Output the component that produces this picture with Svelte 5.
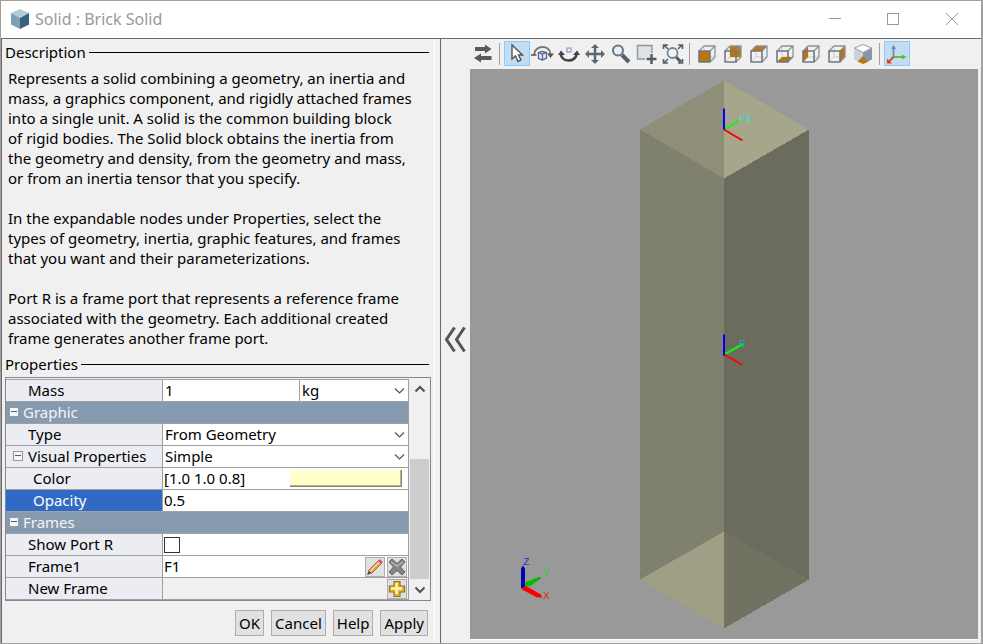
<script>
  const paragraphs = [
    [
      'Represents a solid combining a geometry, an inertia and',
      'mass, a graphics component, and rigidly attached frames',
      'into a single unit. A solid is the common building block',
      'of rigid bodies. The Solid block obtains the inertia from',
      'the geometry and density, from the geometry and mass,',
      'or from an inertia tensor that you specify.'
    ],
    [
      'In the expandable nodes under Properties, select the',
      'types of geometry, inertia, graphic features, and frames',
      'that you want and their parameterizations.'
    ],
    [
      'Port R is a frame port that represents a reference frame',
      'associated with the geometry. Each additional created',
      'frame generates another frame port.'
    ]
  ];

  const faces = [
    { name: 'Front view', d: 'M5 10H16V21H5Z' },
    { name: 'Back view', d: 'M10 5H21V16H10Z' },
    { name: 'Top view', d: 'M5 10L10 5H21L16 10Z' },
    { name: 'Bottom view', d: 'M5 21L10 16H21L16 21Z' },
    { name: 'Left view', d: 'M5 10L10 5V16L5 21Z' },
    { name: 'Right view', d: 'M16 10L21 5V16L16 21Z' }
  ];
</script>

{#snippet chevron()}
  <svg class="chevron" width="11" height="8" viewBox="0 0 11 8" aria-hidden="true">
    <path d="M1 1.5L5.5 6L10 1.5" fill="none" stroke="#555" stroke-width="1.2" />
  </svg>
{/snippet}

{#snippet minus()}
  <svg width="10" height="10" viewBox="0 0 10 10" aria-hidden="true">
    <rect x=".5" y=".5" width="9" height="9" fill="#f6f6f6" stroke="#989898" />
    <path d="M2 4.5H8" stroke="#3c5fa8" />
  </svg>
{/snippet}

<div class="window">
  <header>
    <svg class="logo" width="20" height="22" viewBox="0 0 20 22" aria-hidden="true">
      <path d="M10 0L19 4L10 9L1 4Z" fill="#b5cad8" />
      <path d="M1 4L10 9V20L1 15.500Z" fill="#7f9fb7" />
      <path d="M19 4L10 9V20L19 15.500Z" fill="#376180" />
    </svg>
    <h1>Solid : Brick Solid</h1>
    <button class="win" aria-label="Minimize">
      <svg width="14" height="14" viewBox="0 0 14 14"><path d="M0 5.500H12" stroke="#999" /></svg>
    </button>
    <button class="win" aria-label="Maximize">
      <svg width="14" height="14" viewBox="0 0 14 14"><rect x=".5" y=".5" width="11" height="11" fill="none" stroke="#999" /></svg>
    </button>
    <button class="win" aria-label="Close">
      <svg width="14" height="14" viewBox="0 0 14 14"><path d="M1 0L13 12M13 0L1 12" stroke="#999" /></svg>
    </button>
  </header>

  <div class="body">
    <main class="left">
      <h2>Description</h2>
      <div class="description">
        {#each paragraphs as lines}
          <p>{#each lines as line, i}{line}{#if i < lines.length - 1}<br />{/if}{/each}</p>
        {/each}
      </div>
      <h2>Properties</h2>

      <div class="grid-box">
        <table>
          <colgroup><col class="names" /><col /></colgroup>
          <tbody>
            <tr>
              <th><label for="mass">Mass</label></th>
              <td>
                <div class="cell">
                  <input id="mass" type="text" value="1" />
                  <div class="pick unit">
                    <select aria-label="Mass unit"><option>kg</option></select>{@render chevron()}
                  </div>
                </div>
              </td>
            </tr>
            <tr class="group">
              <th colspan="2"><div class="name"><button aria-label="Collapse Graphic">{@render minus()}</button>Graphic</div></th>
            </tr>
            <tr>
              <th><label for="type">Type</label></th>
              <td>
                <div class="pick">
                  <select id="type"><option>From Geometry</option></select>{@render chevron()}
                </div>
              </td>
            </tr>
            <tr>
              <th class="nested">
                <div class="name">
                  <button aria-label="Collapse Visual Properties">{@render minus()}</button>
                  <label for="visual">Visual Properties</label>
                </div>
              </th>
              <td>
                <div class="pick">
                  <select id="visual"><option>Simple</option></select>{@render chevron()}
                </div>
              </td>
            </tr>
            <tr>
              <th class="deep"><label for="color">Color</label></th>
              <td>
                <div class="cell">
                  <input id="color" class="tight" type="text" value="[1.0 1.0 0.8]" />
                  <button class="swatch" aria-label="Choose color"></button>
                </div>
              </td>
            </tr>
            <tr class="selected">
              <th class="deep"><label for="opacity">Opacity</label></th>
              <td><div class="cell"><input id="opacity" class="tight" type="text" value="0.5" /></div></td>
            </tr>
            <tr class="group">
              <th colspan="2"><div class="name"><button aria-label="Collapse Frames">{@render minus()}</button>Frames</div></th>
            </tr>
            <tr>
              <th><label for="port">Show Port R</label></th>
              <td><div class="cell"><input id="port" type="checkbox" /></div></td>
            </tr>
            <tr>
              <th><label for="frame">Frame1</label></th>
              <td>
                <div class="cell tools">
                  <input id="frame" class="tight" type="text" value="F1" />
                  <button class="tool" aria-label="Edit frame">
                    <svg width="18" height="18" viewBox="0 0 18 18">
                      <path d="M1 17L3 12L6 15Z" fill="#444" />
                      <path d="M2.500 12.500L12.500 2.500L15.500 5.500L5.500 15.500Z" fill="#e6a45a" stroke="#85562c" stroke-width=".8" />
                      <path d="M4 13.500L13.500 4" stroke="#ffd29a" stroke-width="1.200" />
                      <path d="M12 3L14 1L17 4L15 6Z" fill="#dd4f83" />
                    </svg>
                  </button>
                  <button class="tool" aria-label="Delete frame">
                    <svg width="18" height="18" viewBox="0 0 18 18">
                      <path d="M1 4L4 1L9 5.500L14 1L17 4L12.500 9L17 14L14 17L9 12.500L4 17L1 14L5.500 9Z" fill="#858585" stroke="#606060" />
                      <path d="M3 4L9 8L15 4" fill="none" stroke="#b5b5b5" stroke-width="1.500" />
                    </svg>
                  </button>
                </div>
              </td>
            </tr>
            <tr>
              <th>New Frame</th>
              <td class="empty">
                <div class="cell tools">
                  <button class="tool last" aria-label="Add frame">
                    <svg width="18" height="18" viewBox="0 0 18 18">
                      <path d="M6 1.500H12V6H16.500V12H12V16.500H6V12H1.500V6H6Z" fill="#e0b535" stroke="#94701a" stroke-width="1.200" />
                      <path d="M8.500 3V14M3 8.500H14" stroke="#fff3b0" stroke-width="2.500" />
                    </svg>
                  </button>
                </div>
              </td>
            </tr>
          </tbody>
        </table>
        <div class="scrollbar">
          <button aria-label="Scroll up">
            <svg width="12" height="8" viewBox="0 0 12 8"><path d="M1.500 6.500L6 2L10.500 6.500" fill="none" stroke="#505050" stroke-width="2" /></svg>
          </button>
          <div class="thumb"></div>
          <button aria-label="Scroll down">
            <svg width="12" height="8" viewBox="0 0 12 8"><path d="M1.500 1.500L6 6L10.500 1.500" fill="none" stroke="#505050" stroke-width="2" /></svg>
          </button>
        </div>
      </div>

      <div class="actions">
        <button>OK</button><button>Cancel</button><button>Help</button><button>Apply</button>
      </div>
    </main>

    <section class="right">
      <button class="collapse" aria-label="Hide properties">
        <svg width="24" height="28" viewBox="0 0 24 28">
          <path d="M10.500 1.500L2.500 13.500L10.500 25.500M20.500 1.500L12.500 13.500L20.500 25.500" fill="none" stroke="#555" stroke-width="3" />
        </svg>
      </button>
      <div class="stage">
        <nav class="toolbar" aria-label="View tools">
          <button aria-label="Update visualization">
            <svg viewBox="0 0 26 25">
              <path d="M5 6H15V3.500L21.500 8L15 12.500V10H5ZM21.500 15H11V12.500L4 17L11 21.500V19H21.500Z" fill="#5a5a5a" />
            </svg>
          </button>
          <i></i>
          <button class="on" aria-label="Select">
            <svg viewBox="0 0 26 25">
              <path d="M8 4V18L11.500 15L14 20.500L17 19L14.500 14H18.500Z" fill="#fff" stroke="#555" stroke-width="1.400" />
            </svg>
          </button>
          <button aria-label="Rotate">
            <svg viewBox="0 0 26 25" fill="none">
              <path d="M4 14C4 4 20 3 20.500 13" stroke="#777" stroke-width="2" />
              <path d="M17 12.500H24L20.500 17Z" fill="#555" />
              <path d="M1 14H6.500" stroke="#555" stroke-width="1.500" />
              <path d="M8.500 11.500L12 10.500L16.500 11.500V17L12.500 19L8.500 17.500ZM8.500 11.500L12.500 13L16.500 11.500M12.500 13V19" fill="#e5ebf8" stroke="#4d628e" stroke-width="1.300" />
            </svg>
          </button>
          <button aria-label="Roll">
            <svg viewBox="0 0 26 25" fill="none">
              <path d="M5 12C4 22 21 22 20.500 12" stroke="#444" stroke-width="2.600" />
              <path d="M2 14L5 9.500L9 14ZM17 14L21 9.500L24 14Z" fill="#444" />
              <rect x="11" y="7" width="4" height="4" fill="#edf1f6" stroke="#7790b0" />
            </svg>
          </button>
          <button aria-label="Pan">
            <svg viewBox="0 0 26 25">
              <path d="M13 5V21M5 13H21" stroke="#586878" stroke-width="2.500" />
              <path d="M9 7L13 3L17 7ZM9 19L13 23L17 19ZM7 9L3 13L7 17ZM19 9L23 13L19 17Z" fill="#586878" />
            </svg>
          </button>
          <button aria-label="Zoom">
            <svg viewBox="0 0 26 25">
              <path d="M14 14L21 21" stroke="#555e69" stroke-width="4" />
              <circle cx="10" cy="9.500" r="5" fill="#e8eef3" stroke="#69737d" stroke-width="2" />
            </svg>
          </button>
          <button aria-label="Zoom to region">
            <svg viewBox="0 0 26 25">
              <path d="M3.500 4.500H18V18H3.500Z" fill="#dce2e8" stroke="#8c969f" stroke-width="1.400" />
              <path d="M17.500 12V24M11 18H23" stroke="#f0f0f0" stroke-width="4" />
              <path d="M17.500 13V23M12.500 18H22.500" stroke="#505b67" stroke-width="2.500" />
            </svg>
          </button>
          <button aria-label="Fit to view">
            <svg viewBox="0 0 26 25">
              <path d="M3.500 8V4H8M18 4H22.500V8M3.500 18V22H8M18 22H22.500V18M4 4L8 8M22 4L18 8M4 22L8 18" fill="none" stroke="#52606e" stroke-width="1.600" />
              <path d="M15 15L21 21" stroke="#505862" stroke-width="3" />
              <circle cx="12.500" cy="12" r="5" fill="#eef3f7" stroke="#7b858e" stroke-width="1.800" />
            </svg>
          </button>
          <i></i>
          {#each faces as face}
            <button aria-label={face.name}>
              <svg viewBox="0 0 26 25" fill="none" stroke-linejoin="round">
                <path d="M10 5V16M10 16H21M10 16L5 21" stroke="#c9cdd1" />
                <path d={face.d} fill="#bc750d" />
                <path d="M5 10L10 5H21V16L16 21M16 10L21 5" stroke="#8b9299" stroke-width="1.300" />
                <path d="M5 10H16V21H5Z" stroke="#6f7780" stroke-width="1.600" />
              </svg>
            </button>
          {/each}
          <button aria-label="Isometric view">
            <svg viewBox="0 0 26 25">
              <path d="M4 7L13 12V23L4 18.500Z" fill="#cbd2da" />
              <path d="M22 7L13 12V23L22 18.500Z" fill="#8494ab" />
              <path d="M13 3.500L21.500 7L13 11.500L4.500 7Z" fill="#fff" stroke="#999" />
              <path d="M13 15L18.500 20.500L13 23L7.500 20.500Z" fill="#b9781c" />
            </svg>
          </button>
          <i></i>
          <button class="on" aria-label="Show frames">
            <svg viewBox="0 0 26 25">
              <path d="M9.500 16V7" stroke="#7289a5" stroke-width="1.800" />
              <path d="M7 8L9.500 4L12 8Z" fill="#7289a5" />
              <path d="M9.500 16H18" stroke="#62bb20" stroke-width="1.800" />
              <path d="M18 13.500L22.500 16L18 18.500Z" fill="#62bb20" />
              <path d="M9.500 16L5 20.500" stroke="#d8421e" stroke-width="1.800" />
              <path d="M3 17.500V22.500H8Z" fill="#d8421e" />
            </svg>
          </button>
        </nav>
        <div class="viewport">
          <svg viewBox="0 0 508 569" role="img" aria-label="Brick solid with frames F1 and R">
            <g shape-rendering="crispEdges">
              <path d="M254 11L170 60L254 109Z" fill="#8f8e79" />
              <path d="M254 11L339 60L254 109Z" fill="#a6a68b" />
              <path d="M170 60L254 109V462L170 510Z" fill="#80806e" />
              <path d="M339 60L254 109V462L339 510Z" fill="#6b6b5e" />
              <path d="M170 510L254 462V559Z" fill="#9f9f86" />
              <path d="M339 510L254 462V559Z" fill="#727262" />
            </g>
            <g fill="none" stroke-width="2">
              <path d="M254 60L269 51.500M254 285L273 274.500" stroke="#0f0" />
              <path d="M254 60L272.500 71M254 285L272.500 295.500" stroke="#f00" />
              <path d="M254 60V39M254 286V265" stroke="#00f" />
            </g>
            <path d="M53 518L56 512.500L70 507L71 509L61 516Z" fill="#0b0" />
            <path d="M52 517L57 517L71 525L72 528L67 528L52 520Z" fill="#f00" />
            <path d="M51 519V499L53 496L55 499V517Z" fill="#0000b8" />
            <g class="tags">
              <text x="269" y="52" fill="#35e0d5">F1</text>
              <text x="269" y="277" fill="#20aaa4">R</text>
              <text x="53" y="495" fill="#3434c4">Z</text>
              <text x="73" y="506" fill="#20d820">Y</text>
              <text x="73" y="529" fill="#d32b2b">X</text>
            </g>
          </svg>
        </div>
      </div>
    </section>
  </div>
</div>

<style>
  :global(body) {
    margin: 0;
  }

  .window,
  .window * {
    box-sizing: border-box;
  }

  .window {
    display: flex;
    flex-direction: column;
    height: 100vh;
    border: 1px solid #a0a0a0;
    border-right-width: 2px;
    background: #f0f0f0;
    color: #000;
    font: 15px/20px 'Noto Sans', 'Open Sans', sans-serif;
  }

  button,
  input,
  select {
    margin: 0;
    padding: 0;
    border: 0;
    border-radius: 0;
    outline: 0;
    background: transparent;
    color: inherit;
    font: inherit;
  }

  svg {
    display: block;
  }

  header {
    display: flex;
    flex: none;
    align-items: center;
    height: 37px;
    padding-left: 9px;
    background: #fff;
  }

  h1 {
    flex: 1;
    margin: 0 0 2px 5px;
    color: #999;
    font-size: 16px;
    font-weight: 400;
  }

  .win {
    display: grid;
    place-items: center;
    width: 58px;
    height: 36px;
  }

  .body {
    display: flex;
    flex: 1;
    min-height: 0;
    border: solid #696969;
    border-width: 1px 0 0 1px;
  }

  .left {
    display: flex;
    flex: 0 0 433px;
    flex-direction: column;
    padding: 3px 3px 0;
    border-right: 1px solid #fff;
  }

  h2 {
    display: flex;
    align-items: center;
    gap: 3px;
    margin: 0 2px 0 0;
    font-size: 15px;
    font-weight: 400;
  }

  h2::after {
    flex: 1;
    height: 1px;
    background: #000;
    content: '';
  }

  .description {
    padding: 6px 3px;
    white-space: nowrap;
  }

  p {
    margin: 0 0 20px;
  }

  p:last-child {
    margin: 0;
  }

  .grid-box {
    display: flex;
    margin-top: 3px;
    border: 1px solid #828790;
  }

  table {
    flex: 1;
    margin-top: 1px;
    border-top: 1px solid #a0a0a4;
    border-collapse: separate;
    border-spacing: 0;
    table-layout: fixed;
  }

  .names {
    width: 157px;
  }

  th,
  td {
    height: 22px;
    padding: 0;
    border: solid #a0a0a4;
    border-width: 0 1px 1px 0;
    background: #fff;
    line-height: 20px;
  }

  th {
    padding: 0 0 1px 22px;
    background: #ebedf2;
    font-weight: 400;
    text-align: left;
    white-space: nowrap;
  }

  th.nested {
    padding-left: 7px;
  }

  th.deep {
    padding-left: 27px;
  }

  .group th {
    padding-left: 3px;
    background: #879bb0;
    color: #f2f4f7;
  }

  .selected th {
    background: #316ac5;
    color: #fff;
  }

  .name {
    display: flex;
    align-items: center;
    gap: 5px;
  }

  .group .name {
    gap: 4px;
  }

  .cell {
    display: flex;
    align-items: center;
    height: 21px;
  }

  input[type='text'] {
    flex: 1;
    width: 0;
    min-width: 0;
    height: 21px;
    padding: 0 0 1px 2px;
  }

  input[type='text'].tight {
    padding-left: 1px;
  }

  input[type='checkbox'] {
    width: 16px;
    height: 16px;
    margin-left: 1px;
    border: 1px solid #333;
    background: #fff;
    appearance: none;
  }

  .pick {
    display: grid;
    align-items: center;
  }

  .unit {
    flex: 0 0 109px;
    border-left: 1px solid #a0a0a4;
  }

  select,
  .chevron {
    grid-area: 1 / 1;
  }

  select {
    width: 100%;
    height: 21px;
    padding: 0 0 1px 2px;
    appearance: none;
  }

  .chevron {
    justify-self: end;
    margin-right: 3px;
    pointer-events: none;
  }

  .swatch {
    width: 112px;
    height: 17px;
    margin-right: 6px;
    border: solid #84846a;
    border-width: 0 1px 1px 0;
    background: #ffffcb;
    box-shadow: inset -1px -1px #b5b58b;
  }

  .tools {
    gap: 2px;
    padding-right: 1px;
  }

  .tool {
    width: 20px;
    height: 20px;
    border: 1px solid #adadad;
    background: #e1e1e1;
  }

  .last {
    margin-left: auto;
  }

  .empty {
    background: #f0f0f0;
  }

  .scrollbar {
    display: flex;
    flex: 0 0 21px;
    flex-direction: column;
    padding: 0 1px;
  }

  .scrollbar button {
    display: grid;
    flex: none;
    place-items: center;
    height: 21px;
  }

  .thumb {
    height: 120px;
    margin-top: auto;
    background: #cdcdcd;
  }

  .actions {
    display: flex;
    justify-content: flex-end;
    gap: 7px;
    padding: 9px 3px 0 0;
  }

  .actions button {
    height: 26px;
    padding: 0 3px;
    border: 1px solid #adadad;
    background: #e1e1e1;
  }

  .right {
    display: flex;
    flex: 1;
    min-width: 0;
    margin-left: 5px;
    padding: 0 3px 3px 0;
    border-left: 1px solid #696969;
  }

  .collapse {
    display: grid;
    flex: 0 0 29px;
    place-items: center;
  }

  .stage {
    display: flex;
    flex: 1;
    flex-direction: column;
    min-width: 0;
  }

  .toolbar {
    display: flex;
    flex: none;
    height: 30px;
    padding-top: 2px;
  }

  .toolbar button {
    width: 26px;
    height: 25px;
  }

  .toolbar svg {
    width: 26px;
    height: 25px;
  }

  .toolbar .on {
    background: #c2dcf3;
    box-shadow: inset 0 0 0 1px #90c8f6;
  }

  .toolbar i {
    width: 1px;
    height: 22px;
    margin: 2px 4px 0 3px;
    background: #a0a0a0;
  }

  .viewport {
    flex: 1;
    min-height: 0;
    border-bottom: 1px solid #fff;
    background: #999;
  }

  .viewport svg {
    width: 100%;
    height: 100%;
  }

  .tags {
    font: 11px 'Liberation Mono', monospace;
  }
</style>
